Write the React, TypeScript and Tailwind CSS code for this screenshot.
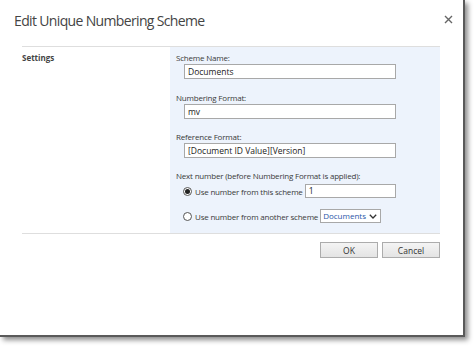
export default function App() {
  return (
    <div className="w-[474px] h-[347px] bg-white overflow-hidden" style={{ fontFamily: '"Open Sans", "Noto Sans", sans-serif' }}>
      {/* dialog, cropped at top/left */}
      <div className="relative w-[465px] h-[337px] bg-white border-r-2 border-b-2 border-[#5a5a5a] shadow-[3px_3px_5px_rgba(0,0,0,0.45)]">
        {/* title bar */}
        <div className="flex items-start justify-between h-[46px] pl-[14px] pr-[10px] pt-[11px]">
          <div className="text-[14px] leading-[20px] tracking-[-0.65px] text-[#444]">Edit Unique Numbering Scheme</div>
          <svg width="9" height="9" viewBox="0 0 9 9" className="mt-[4px]">
            <path d="M1 1 L8 8 M8 1 L1 8" stroke="#666" strokeWidth="1.4" />
          </svg>
        </div>

        <div className="ml-[22px] w-[418px]">
          {/* settings section */}
          <div className="flex border-t border-[#dedede] h-[187px]">
            <div className="w-[148px] pt-[5px] text-[8px] leading-[11px] font-bold text-[#444]">Settings</div>
            <div className="flex-1 bg-[#edf3fc] pl-[6px] pt-[5px] text-[8px] leading-[11px] tracking-[-0.2px] text-[#3a3a3a]">
              <div>Scheme Name:</div>
              <div className="ml-[8px] mt-[1px] w-[212px] h-[15px] border border-[#a8a8a8] bg-white px-[3px] text-[8.5px] leading-[13px] tracking-normal text-[#222]">Documents</div>

              <div className="mt-[13px]">Numbering Format:</div>
              <div className="ml-[8px] mt-[1px] w-[212px] h-[15px] border border-[#a8a8a8] bg-white px-[3px] text-[8.5px] leading-[13px] tracking-normal text-[#222]">mv</div>

              <div className="mt-[12px]">Reference Format:</div>
              <div className="ml-[8px] mt-[1px] w-[212px] h-[15px] border border-[#a8a8a8] bg-white px-[3px] text-[8.5px] leading-[13px] tracking-normal text-[#222]">[Document ID Value][Version]</div>

              <div className="mt-[12px]">Next number (before Numbering Format is applied):</div>
              <div className="flex items-center w-[213px] ml-[7px] mt-[3px]">
                <span className="w-[9px] h-[9px] rounded-full border border-[#555] bg-white flex items-center justify-center">
                  <span className="w-[5px] h-[5px] rounded-full bg-[#222]" />
                </span>
                <span className="ml-[3px] whitespace-nowrap">Use number from this scheme</span>
                <div className="ml-[2px] flex-1 h-[14px] border border-[#a8a8a8] bg-white px-[3px] text-[8.5px] leading-[12px] tracking-normal text-[#222]">1</div>
              </div>
              <div className="flex items-center ml-[7px] mt-[11px]">
                <span className="w-[9px] h-[9px] rounded-full border border-[#555] bg-white" />
                <span className="ml-[3px] whitespace-nowrap">Use number from another scheme</span>
                <div className="ml-[2px] w-[61px] h-[14px] border border-[#a8a8a8] bg-white pl-[2px] pr-[3px] flex items-center justify-between text-[8px] leading-[12px] tracking-normal text-[#2a56a8]">
                  <span>Documents</span>
                  <svg width="8" height="5" viewBox="0 0 8 5" className="shrink-0">
                    <path d="M0.8 0.8 L4 4 L7.2 0.8" fill="none" stroke="#333" strokeWidth="1.3" />
                  </svg>
                </div>
              </div>
            </div>
          </div>

          {/* buttons */}
          <div className="flex justify-end gap-[4px] border-t border-[#dedede] pt-[8px] text-[8.5px] leading-[13px] text-[#333]">
            <button className="w-[58px] h-[16px] border border-[#acacac] bg-gradient-to-b from-[#f4f4f4] to-[#e4e4e4]">OK</button>
            <button className="w-[58px] h-[16px] border border-[#acacac] bg-gradient-to-b from-[#f4f4f4] to-[#e4e4e4]">Cancel</button>
          </div>
        </div>
      </div>
    </div>
  );
}
